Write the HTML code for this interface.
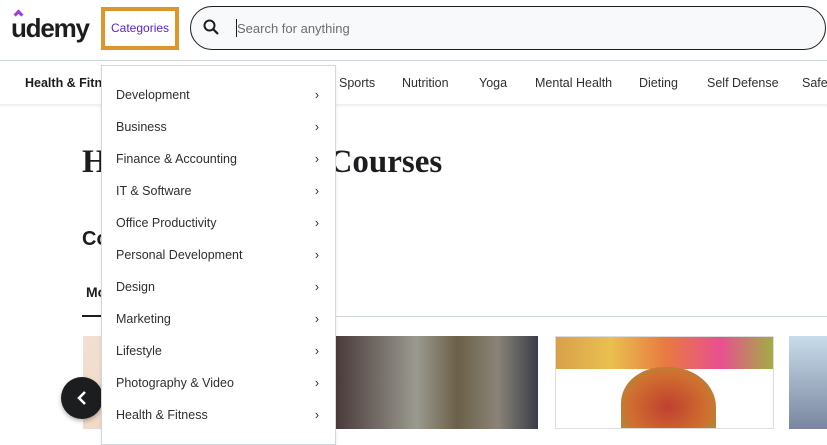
<!DOCTYPE html>
<html><head><style>
*{margin:0;padding:0;box-sizing:border-box}
body{width:827px;height:429px;overflow:hidden;background:#fff;font-family:"Liberation Sans",sans-serif;color:#1c1d1f;position:relative}
.a{position:absolute}
.nav span{position:absolute;top:76px;font-size:12.5px;color:#2d2f31}
.menu{position:absolute;left:101px;top:65px;width:235px;height:380px;background:#fff;border:1px solid #d1d7dc;box-shadow:0 2px 4px rgba(0,0,0,.08)}
.menu div{position:absolute;left:14px;font-size:12.5px;color:#2d2f31;width:203px}
.menu div b{position:absolute;right:0;font-weight:normal}
</style></head><body>
<div class="a" style="left:11px;top:13px;font-size:26px;font-weight:bold;letter-spacing:-1.2px;color:#1c1d1f">udemy</div>
<div class="a" style="top:11px;left:15px;width:7px;height:7px;border-top:3px solid #a435f0;border-left:3px solid #a435f0;transform:rotate(45deg)"></div>
<div class="a" style="left:101px;top:7px;width:78px;height:43px;border:4px solid #dc962b"></div>
<div class="a" style="left:111px;top:21px;font-size:12px;color:#5624d0">Categories</div>
<div class="a" style="left:190px;top:6px;width:636px;height:44px;border:1px solid #1c1d1f;border-radius:22px;background:#f7f9fa"></div>
<svg class="a" style="left:203px;top:19px" width="16" height="16" viewBox="0 0 16 16"><circle cx="6.5" cy="6.5" r="5" fill="none" stroke="#1c1d1f" stroke-width="2"/><path d="M10 10l5 5" stroke="#1c1d1f" stroke-width="2.2"/></svg>
<div class="a" style="left:236px;top:19px;width:1px;height:18px;background:#1c1d1f"></div>
<div class="a" style="left:237px;top:21px;font-size:13px;color:#6a6f73">Search for anything</div>
<div class="a" style="left:0;top:60px;width:827px;height:1px;background:#d1d7dc"></div>
<div class="a" style="left:0;top:104px;width:827px;height:4px;background:linear-gradient(#eee,#fff)"></div>
<div class="nav">
<span style="left:25px;font-weight:bold;color:#1c1d1f">Health &amp; Fitness</span>
<span style="left:339px">Sports</span><span style="left:402px">Nutrition</span><span style="left:479px">Yoga</span><span style="left:535px">Mental Health</span><span style="left:639px">Dieting</span><span style="left:707px">Self Defense</span><span style="left:802px">Safety</span>
</div>
<div class="a" style="left:82px;top:144px;font-family:'Liberation Serif',serif;font-weight:bold;font-size:33px">Health &amp; Fitness Courses</div>
<div class="a" style="left:82px;top:228px;font-weight:bold;font-size:20px">Courses to get you started</div>
<div class="a" style="left:86px;top:284px;font-weight:bold;font-size:14px">Most popular</div>
<div class="a" style="left:82px;top:316px;width:745px;height:1px;background:#d1d7dc"></div>
<div class="a" style="left:82px;top:315px;width:110px;height:2px;background:#1c1d1f"></div>
<div class="a" style="left:83px;top:336px;width:218px;height:93px;background:linear-gradient(135deg,#f3e0d2,#e8cbb5)"></div>
<div class="a" style="left:336px;top:336px;width:202px;height:93px;background:linear-gradient(90deg,#4a3a3a,#9a9a90 40%,#6b6048 60%,#8a8478 80%,#3a3d48)"></div>
<div class="a" style="left:555px;top:336px;width:219px;height:93px;background:#fff;border:1px solid #ddd;overflow:hidden">
<div class="a" style="left:0;top:0;width:219px;height:32px;background:linear-gradient(90deg,#d9a04a,#e9c050,#e87a40,#e85090,#a0b040)"></div>
<div class="a" style="left:65px;top:30px;width:95px;height:80px;border-radius:45% 50% 0 0;background:radial-gradient(#c04030,#d07030 60%,#90a040)"></div></div>
<div class="a" style="left:789px;top:336px;width:38px;height:93px;background:linear-gradient(#c8dcea,#7a86a0)"></div>
<div class="a" style="left:61px;top:377px;width:42px;height:42px;border-radius:50%;background:#1c1d1f;box-shadow:0 2px 4px rgba(0,0,0,.3)"></div>
<svg class="a" style="left:76px;top:391px" width="12" height="14" viewBox="0 0 12 14"><path d="M9 1L3 7l6 6" fill="none" stroke="#fff" stroke-width="2.5"/></svg>
<div class="menu">
<div style="top:22px">Development<b>›</b></div>
<div style="top:54px">Business<b>›</b></div>
<div style="top:86px">Finance &amp; Accounting<b>›</b></div>
<div style="top:118px">IT &amp; Software<b>›</b></div>
<div style="top:150px">Office Productivity<b>›</b></div>
<div style="top:182px">Personal Development<b>›</b></div>
<div style="top:214px">Design<b>›</b></div>
<div style="top:246px">Marketing<b>›</b></div>
<div style="top:278px">Lifestyle<b>›</b></div>
<div style="top:310px">Photography &amp; Video<b>›</b></div>
<div style="top:342px">Health &amp; Fitness<b>›</b></div>
</div>
</body></html>
